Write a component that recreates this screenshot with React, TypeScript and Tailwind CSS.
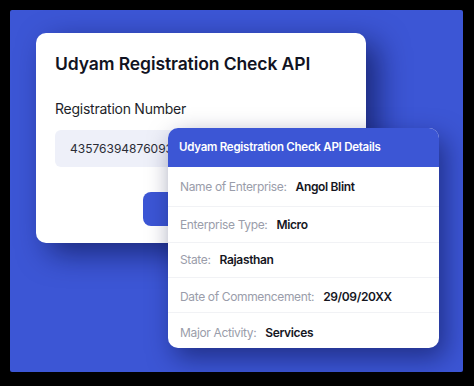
import React from "react";

const rows: { label: string; value: string; h: string }[] = [
  { label: "Name of Enterprise:", value: "Angol Blint", h: "h-[40px] pt-[0px]" },
  { label: "Enterprise Type:", value: "Micro", h: "h-[36px] pt-[0px]" },
  { label: "State:", value: "Rajasthan", h: "h-[35px] pt-[0px]" },
  { label: "Date of Commencement:", value: "29/09/20XX", h: "h-[35px] pt-[3px]" },
  { label: "Major Activity:", value: "Services", h: "h-[35px] pt-[5px]" },
];

export default function App() {
  return (
    <div
      className="w-[474px] h-[386px] bg-black pt-[10px] pl-[10px]"
      style={{ fontFamily: "Inter, 'Noto Sans', sans-serif" }}
    >
      <div className="relative w-[453px] h-[362px] bg-[#3c56d5] rounded-[2px] pt-[23px] pl-[26px]">
        <div className="w-[330px] h-[210px] bg-white rounded-[10px] shadow-[12px_10px_30px_rgba(5,10,60,0.6)] pt-[19px] px-[19px]">
          <div className="text-[17.5px] leading-[24px] font-semibold text-[#111322] tracking-[-0.1px]">
            Udyam Registration Check API
          </div>
          <div className="mt-[23px] text-[14px] leading-[20px] text-[#1d1f2a] tracking-[-0.25px]">
            Registration Number
          </div>
          <div className="mt-[11px] h-[37px] w-[290px] rounded-[6px] bg-[#eef0f9] flex items-center pl-[15px] text-[12px] text-[#2a2c36]">
            4357639487609312
          </div>
          <div className="mt-[25px] ml-[88px] h-[34px] w-[120px] rounded-[8px] bg-[#3c56d5]" />
        </div>

        <div className="absolute left-[158px] top-[118px] w-[271px] h-[220px] bg-white rounded-[10px] overflow-hidden shadow-[6px_10px_26px_rgba(5,10,60,0.5)] flex flex-col">
          <div className="h-[39px] shrink-0 bg-[#3c56d5] flex items-center pl-[11px] pt-[1px] text-white text-[11.5px] tracking-[-0.25px] font-semibold">
            Udyam Registration Check API Details
          </div>
          {rows.map((r, i) => (
            <div
              key={r.label}
              className={`shrink-0 flex items-center pl-[12px] gap-[9px] text-[12px] tracking-[-0.35px] ${r.h} ${
                i < rows.length - 1 ? "border-b border-[#f1f2f5]" : ""
              }`}
            >
              <span className="text-[#9a9daa]">{r.label}</span>
              <span className="text-[#15161e] font-semibold">{r.value}</span>
            </div>
          ))}
        </div>
      </div>
    </div>
  );
}
